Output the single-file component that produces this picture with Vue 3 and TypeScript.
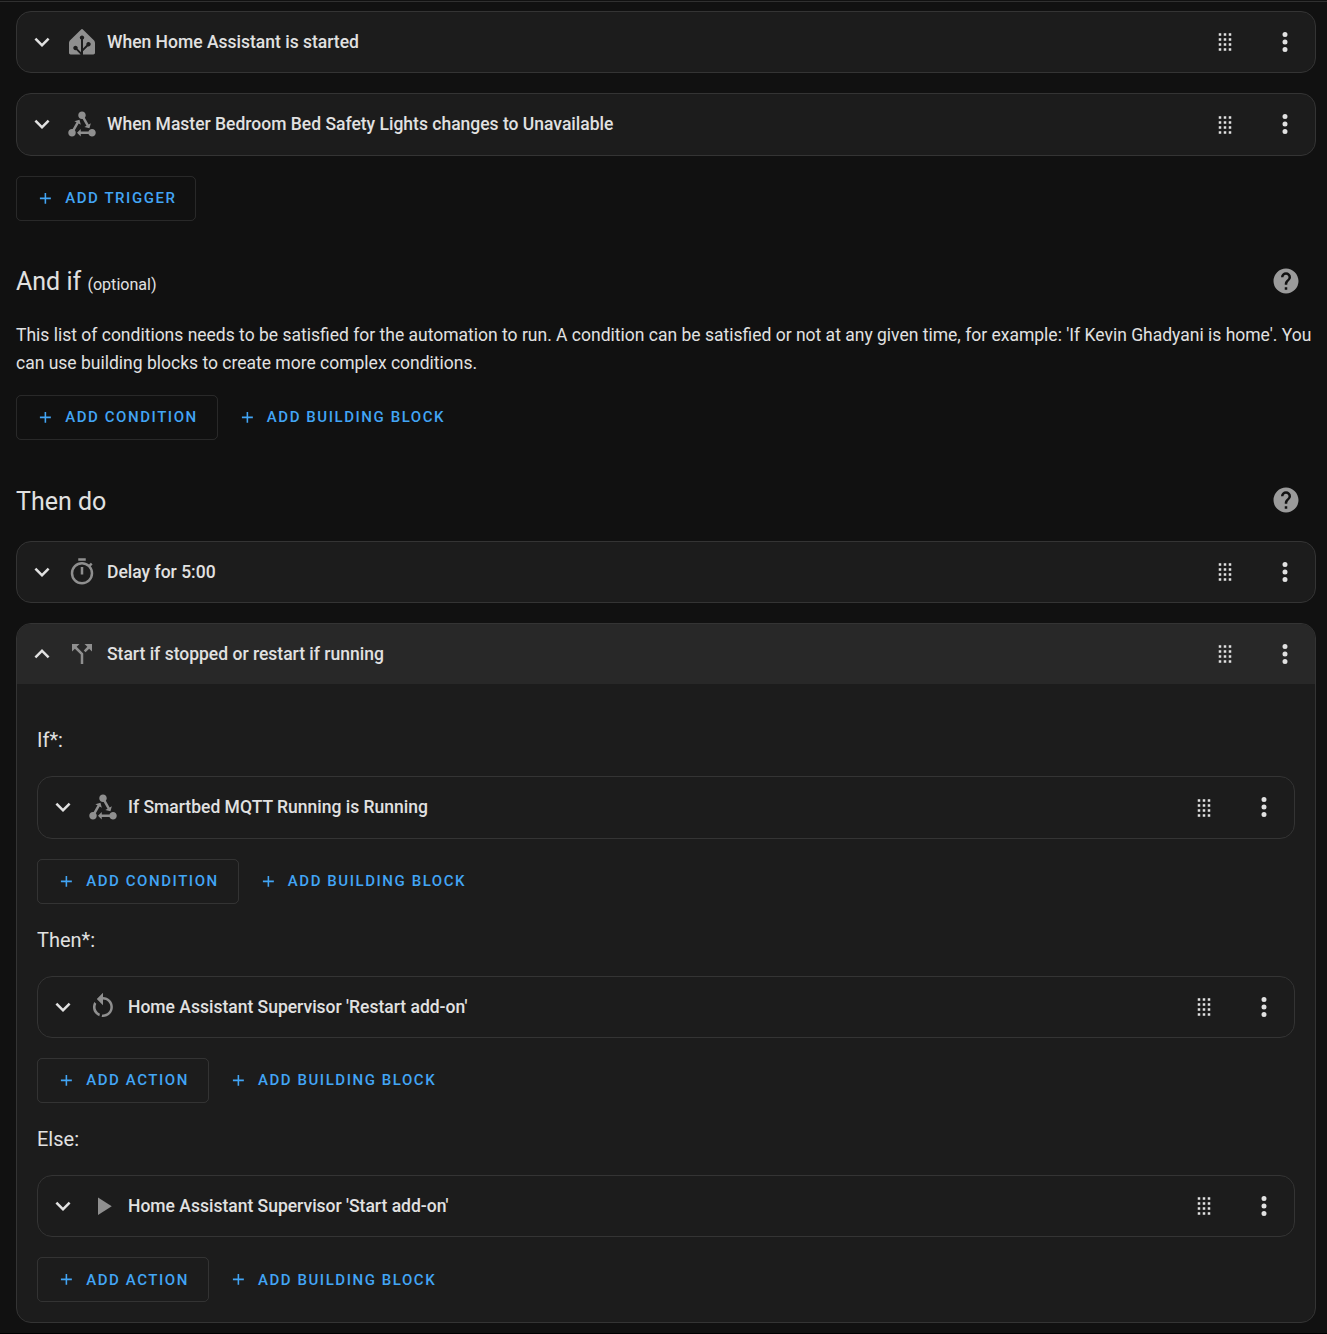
<script setup lang="ts">
import { defineComponent, h } from 'vue'

const icons: Record<string, string> = {
  down: 'M7.41,8.58L12,13.17L16.59,8.58L18,10L12,16L6,10L7.41,8.58Z',
  up: 'M7.41,15.41L12,10.83L16.59,15.41L18,14L12,8L6,14L7.41,15.41Z',
  drag: 'M7,19V17H9V19H7M11,19V17H13V19H11M15,19V17H17V19H15M7,15V13H9V15H7M11,15V13H13V15H11M15,15V13H17V15H15M7,11V9H9V11H7M11,11V9H13V11H11M15,11V9H17V11H15M7,7V5H9V7H7M11,7V5H13V7H11M15,7V5H17V7H15Z',
  dots: 'M12,16A2,2 0 0,1 14,18A2,2 0 0,1 12,20A2,2 0 0,1 10,18A2,2 0 0,1 12,16M12,10A2,2 0 0,1 14,12A2,2 0 0,1 12,14A2,2 0 0,1 10,12A2,2 0 0,1 12,10M12,4A2,2 0 0,1 14,6A2,2 0 0,1 12,8A2,2 0 0,1 10,6A2,2 0 0,1 12,4Z',
  plus: 'M19,13H13V19H11V13H5V11H11V5H13V11H19V13Z',
  help: 'M15.07,11.25L14.17,12.17C13.45,12.89 13,13.5 13,15H11V14.5C11,13.39 11.45,12.39 12.17,11.67L13.41,10.41C13.78,10.05 14,9.55 14,9C14,7.89 13.1,7 12,7A2,2 0 0,0 10,9H8A4,4 0 0,1 12,5A4,4 0 0,1 16,9C16,9.88 15.64,10.67 15.07,11.25M13,19H11V17H13M12,2A10,10 0 0,0 2,12A10,10 0 0,0 12,22A10,10 0 0,0 22,12C22,6.47 17.5,2 12,2Z',
  timer: 'M12,20A7,7 0 0,1 5,13A7,7 0 0,1 12,6A7,7 0 0,1 19,13A7,7 0 0,1 12,20M19.03,7.39L20.45,5.97C20,5.46 19.55,5 19.04,4.56L17.62,6C16.07,4.74 14.12,4 12,4A9,9 0 0,0 3,13A9,9 0 0,0 12,22C17,22 21,17.97 21,13C21,10.88 20.26,8.93 19.03,7.39M11,14H13V8H11M15,1H9V3H15V1Z',
  split: 'M14,4L16.29,6.29L13.41,9.17L14.83,10.59L17.71,7.71L20,10V4M10,4H4V10L6.29,7.71L11,12.41V20H13V11.59L7.71,6.29',
  restart: 'M12,4C14.1,4 16.1,4.8 17.6,6.3C20.7,9.4 20.7,14.5 17.6,17.6C15.8,19.5 13.3,20.2 10.9,19.9L11.4,17.9C13.1,18.1 14.9,17.5 16.2,16.2C18.5,13.9 18.5,10.1 16.2,7.7C15.1,6.6 13.5,6 12,6V10.6L7,5.6L12,0.6V4M6.3,17.6C3.7,15 3.3,11 5.1,7.9L6.6,9.4C5.5,11.6 5.9,14.4 7.8,16.2C8.3,16.7 8.9,17.1 9.6,17.4L9,19.4C8,19 7.1,18.4 6.3,17.6Z',
  play: 'M8,5.14V19.14L19,12.14L8,5.14Z',
  state: 'M6.27 17.05C6.72 17.58 7 18.25 7 19C7 20.66 5.66 22 4 22S1 20.66 1 19 2.34 16 4 16C4.18 16 4.36 16 4.53 16.05L7.6 10.69L5.86 9.7L9.95 8.58L11.07 12.67L9.33 11.68L6.27 17.05M20 16C18.7 16 17.6 16.84 17.18 18H11V16L8 19L11 22V20H17.18C17.6 21.16 18.7 22 20 22C21.66 22 23 20.66 23 19S21.66 16 20 16M12 8C12.18 8 12.36 8 12.53 7.95L15.6 13.31L13.86 14.3L17.95 15.42L19.07 11.33L17.33 12.32L14.27 6.95C14.72 6.42 15 5.75 15 5C15 3.34 13.66 2 12 2S9 3.34 9 5 10.34 8 12 8Z',
  home: 'M22.939 10.627 13.061.749a1.505 1.505 0 0 0-2.121 0l-9.879 9.878C.478 11.21 0 12.363 0 13.187v9c0 .826.675 1.5 1.5 1.5h9.227l-4.063-4.062a2.034 2.034 0 0 1-.664.113c-1.13 0-2.05-.92-2.05-2.05s.92-2.05 2.05-2.05 2.05.92 2.05 2.05c0 .233-.041.456-.113.665l3.163 3.163V9.928a2.05 2.05 0 0 1-1.15-1.84c0-1.13.92-2.05 2.05-2.05s2.05.92 2.05 2.05a2.05 2.05 0 0 1-1.15 1.84v8.127l3.146-3.146A2.051 2.051 0 0 1 18 12.239c1.13 0 2.05.92 2.05 2.05s-.92 2.05-2.05 2.05a2.034 2.034 0 0 1-.709-.127L12.9 20.602v3.088h9.6c.825 0 1.5-.675 1.5-1.5v-9c0-.825-.477-1.977-1.061-2.561z',
}

const Icon = defineComponent({
  props: { name: { type: String, required: true } },
  setup: (props) => () =>
    h('svg', { class: 'icon', viewBox: props.name === 'home' ? '-1.85 -1.7 27.7 27.7' : '0 0 24 24' }, [
      h('path', { d: icons[props.name] }),
    ]),
})

const Row = defineComponent({
  props: {
    icon: { type: String, required: true },
    title: { type: String, required: true },
    open: Boolean,
  },
  setup: (props) => () =>
    h('div', { class: ['row', { open: props.open }] }, [
      h(Icon, { name: props.open ? 'up' : 'down' }),
      h(Icon, { name: props.icon, class: 'kind' }),
      h('span', { class: 'title' }, props.title),
      h(Icon, { name: 'drag', class: 'drag' }),
      h(Icon, { name: 'dots', class: 'menu' }),
    ]),
})

const Buttons = defineComponent({
  props: { label: { type: String, required: true }, block: { type: Boolean, default: true } },
  setup: (props) => () =>
    h('div', { class: 'buttons' }, [
      h('button', { class: 'btn outlined' }, [h(Icon, { name: 'plus' }), h('span', props.label)]),
      props.block ? h('button', { class: 'btn' }, [h(Icon, { name: 'plus' }), h('span', 'Add building block')]) : null,
    ]),
})

const branches = [
  { label: 'If*:', icon: 'state', title: 'If Smartbed MQTT Running is Running', add: 'Add condition', tall: true },
  { label: 'Then*:', icon: 'restart', title: "Home Assistant Supervisor 'Restart add-on'", add: 'Add action', tall: false },
  { label: 'Else:', icon: 'play', title: "Home Assistant Supervisor 'Start add-on'", add: 'Add action', tall: false },
]
</script>

<template>
  <div class="page">
    <div class="topbar"></div>
    <main class="content">
      <div class="card"><Row icon="home" title="When Home Assistant is started" /></div>
      <div class="card tall"><Row icon="state" title="When Master Bedroom Bed Safety Lights changes to Unavailable" /></div>
      <Buttons label="Add trigger" :block="false" />

      <header class="section">
        <h2>And if <small>(optional)</small></h2>
        <Icon name="help" />
      </header>
      <p class="description">
        This list of conditions needs to be satisfied for the automation to run. A condition can be satisfied or not at any given time, for example: 'If Kevin Ghadyani is home'. You can use building blocks to create more complex conditions.
      </p>
      <Buttons label="Add condition" />

      <header class="section actions">
        <h2>Then do</h2>
        <Icon name="help" />
      </header>
      <div class="card"><Row icon="timer" title="Delay for 5:00" /></div>
      <div class="card expanded">
        <Row icon="split" title="Start if stopped or restart if running" open />
        <div class="body">
          <template v-for="b in branches" :key="b.label">
            <div class="label">{{ b.label }}</div>
            <div class="card" :class="{ tall: b.tall }"><Row :icon="b.icon" :title="b.title" /></div>
            <Buttons :label="b.add" />
          </template>
        </div>
      </div>
    </main>
  </div>
</template>

<style>
body {
  margin: 0;
  background: #111;
}
</style>

<style scoped>
.page {
  box-sizing: border-box;
  height: 1334px;
  overflow: hidden;
  background: #111;
  border-bottom: 1px solid #000;
  color: #e1e1e1;
  font-family: Roboto, "Noto Sans", sans-serif;
  font-size: 17.5px;
}
.topbar {
  height: 1px;
  background: #111;
  border-bottom: 1px solid #303030;
}
.content {
  padding: 9px 11px 0 16px;
}
.page :deep(.icon) {
  display: block;
  flex: none;
  width: 30px;
  height: 30px;
  fill: currentColor;
}
.card {
  box-sizing: border-box;
  height: 62px;
  margin-bottom: 20px;
  border: 1px solid #343434;
  border-radius: 15px;
  background: #1c1c1c;
  overflow: hidden;
}
.card.tall {
  height: 63px;
}
.card.expanded {
  height: auto;
  margin-bottom: 0;
}
.page :deep(.row) {
  display: flex;
  align-items: center;
  height: 60px;
  box-sizing: border-box;
  padding: 0 15px 0 10px;
}
.page :deep(.row.open) {
  background: #282828;
}
.page :deep(.kind) {
  margin: 0 10px;
  color: #8f8f8f;
}
.page :deep(.title) {
  flex: 1;
  font-weight: 500;
  white-space: nowrap;
}
.page :deep(.menu) {
  margin-left: 30px;
}
.tall :deep(.drag) {
  margin-top: 2px;
}
.body {
  padding: 20px;
}
.label {
  height: 72px;
  font-size: 20px;
  line-height: 72px;
}
.page :deep(.buttons) {
  display: flex;
  height: 45px;
}
.page :deep(.btn) {
  box-sizing: border-box;
  display: flex;
  align-items: center;
  gap: 10.5px;
  height: 45px;
  margin: 0;
  padding: 0 20px;
  border: 0;
  background: none;
  color: #42a5f5;
  font: 500 15px Roboto, "Noto Sans", sans-serif;
  letter-spacing: 1.5625px;
  text-transform: uppercase;
  white-space: nowrap;
}
.page :deep(.btn.outlined) {
  padding: 0 18.75px 0 19px;
  border: 1px solid rgba(225, 225, 225, 0.12);
  border-radius: 5px;
}
.page :deep(.btn span) {
  padding-bottom: 1.5px;
}
.body :deep(.buttons:last-child .btn span) {
  padding-bottom: 0;
}
.page :deep(.btn .icon) {
  width: 18.75px;
  height: 18.75px;
}
.section {
  display: flex;
  align-items: center;
  justify-content: space-between;
  height: 60px;
  margin-top: 30px;
  padding-right: 15px;
  color: #e1e1e1;
}
.section.actions {
  margin-bottom: 11px;
}
.section :deep(.icon) {
  color: #9b9b9b;
}
h2 {
  margin: 0;
  padding-top: 4px;
  font-size: 25px;
  font-weight: 400;
  line-height: 30px;
}
small {
  font-size: 16.1px;
}
.description {
  margin: 10px 0 18px;
  line-height: 28px;
}
</style>
